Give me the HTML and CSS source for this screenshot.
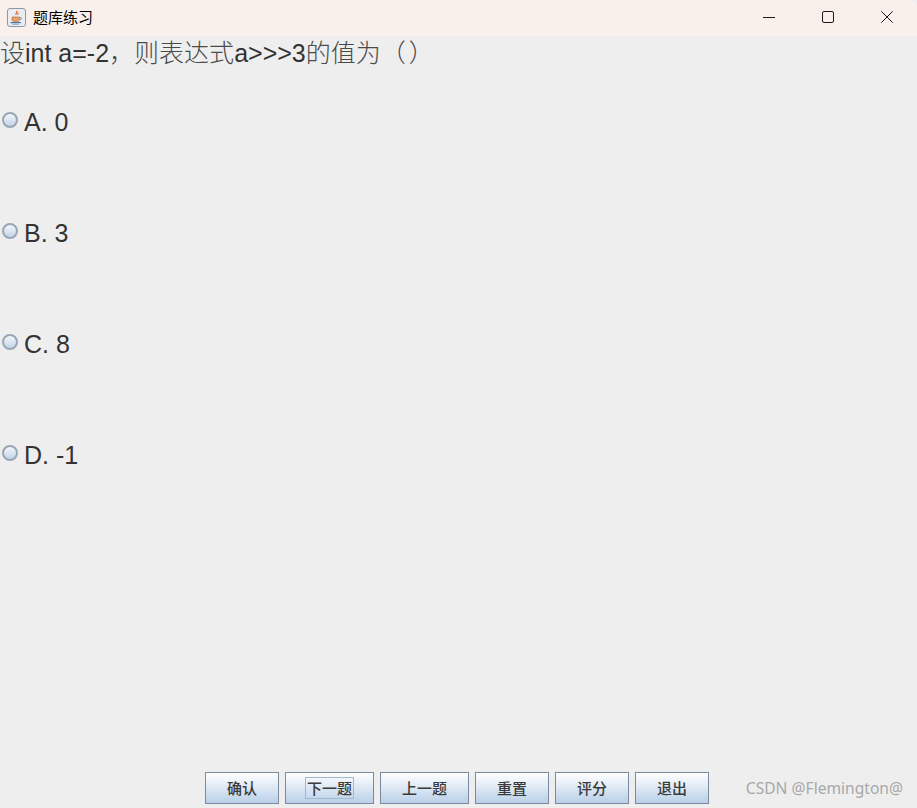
FILE: index.html
```html
<!DOCTYPE html>
<html lang="zh">
<head>
<meta charset="utf-8">
<title>题库练习</title>
<link rel="stylesheet" href="styles.css">
</head>
<body>
<div class="window">
  <header class="titlebar">
    <div class="app">
      <svg class="app-icon" width="19" height="19" viewBox="0 0 19 19">
        <rect x="0.5" y="0.5" width="18" height="18" rx="2.5" fill="#ebedf0" stroke="#8c98a6"/>
        <path d="M9.5 3c1.6 1.4-1.6 2.2-.4 3.8M11 4.5c.8 1-1 1.4-.3 2.4" fill="none" stroke="#d9622b" stroke-width="1.1"/>
        <path d="M5 9h7.5v2.6c0 1.3-1 2-2 2H7c-1 0-2-.7-2-2z" fill="#e9a06a" stroke="#b5622f" stroke-width=".6"/>
        <path d="M12.5 9.6h1.4c.9 0 .9 2-.9 2" fill="none" stroke="#5a7fa6" stroke-width=".8"/>
        <path d="M3.5 14.6h10.5" stroke="#4f7ba8" stroke-width="1.2"/>
        <path d="M5 16.2h7" stroke="#7b9cc0" stroke-width="1"/>
      </svg>
      <span class="app-title">题库练习</span>
    </div>
    <div class="controls">
      <span class="control"><svg width="12" height="12" viewBox="0 0 12 12"><path d="M0 6.5h12" stroke="#1a1a1a" stroke-width="1"/></svg></span>
      <span class="control"><svg width="12" height="12" viewBox="0 0 12 12"><rect x=".5" y=".5" width="11" height="11" rx="1.5" fill="none" stroke="#1a1a1a"/></svg></span>
      <span class="control"><svg width="12" height="12" viewBox="0 0 12 12"><path d="M.3.3l11.4 11.4M11.7.3L.3 11.7" stroke="#1a1a1a" stroke-width="1"/></svg></span>
    </div>
  </header>
  <main class="content">
    <p class="question"><span class="cjk">设</span>int a=-2<span class="cjk">，则表达式</span>a&gt;&gt;&gt;3<span class="cjk">的值为<span class="paren">（</span>）</span></p>
    <div class="options">
      <label class="option"><span class="radio"></span><span class="option-text">A. 0</span></label>
      <label class="option"><span class="radio"></span><span class="option-text">B. 3</span></label>
      <label class="option"><span class="radio"></span><span class="option-text">C. 8</span></label>
      <label class="option"><span class="radio"></span><span class="option-text">D. -1</span></label>
    </div>
  </main>
  <footer class="actions">
    <button class="btn btn-short">确认</button>
    <button class="btn btn-long"><span class="focus">下一题</span></button>
    <button class="btn btn-long">上一题</button>
    <button class="btn btn-short">重置</button>
    <button class="btn btn-short">评分</button>
    <button class="btn btn-short">退出</button>
  </footer>
  <span class="watermark">CSDN @Flemington@</span>
</div>
</body>
</html>
```

FILE: styles.css
```css
* { box-sizing: border-box; }
html, body { margin: 0; height: 100%; }
body {
  background: #eeeeee;
  font-family: "Liberation Sans", "Noto Sans CJK SC", sans-serif;
  color: #333333;
  overflow: hidden;
}
.window {
  position: relative;
  height: 808px;
  display: flex;
  flex-direction: column;
}
.titlebar {
  height: 36px;
  flex: none;
  background: #f9f0ec;
  display: flex;
  justify-content: space-between;
  align-items: center;
  border-top-right-radius: 8px;
  padding-bottom: 2px;
}
.app { display: flex; align-items: center; gap: 7px; padding-left: 7px; }
.app-icon { display: block; }
.app-title { font-size: 15px; line-height: 18px; color: #000; font-family: "Noto Sans CJK SC", sans-serif; font-weight: 400; }
.controls { display: flex; padding-right: 1px; }
.control { width: 59px; height: 34px; display: flex; align-items: center; justify-content: center; }
.content { flex: 1; }
.question {
  margin: 0;
  font-size: 25px;
  line-height: 34px;
  color: #333;
}
.cjk { font-weight: 300; color: #4a4a4a; }
.paren { padding-right: 3px; }
.options { display: flex; flex-direction: column; gap: 77px; margin-top: 35px; }
.option { display: flex; align-items: center; height: 34px; padding-left: 2px; gap: 6px; }
.radio {
  width: 16px;
  height: 16px;
  border-radius: 50%;
  border: 2px solid #98a6b6;
  background: linear-gradient(#f4f7fb, #c2d4e6);
  margin-top: -4px;
}
.option-text { font-size: 25px; line-height: 34px; }
.actions {
  flex: none;
  display: flex;
  gap: 6px;
  padding-left: 205px;
  padding-bottom: 4px;
}
.btn {
  height: 32px;
  padding: 0 0 2px;
  border: 1px solid #7a8a9e;
  background: linear-gradient(#ffffff, #b9d0e8);
  font-family: "Noto Sans CJK SC", sans-serif;
  font-size: 15px;
  font-weight: 500;
  color: #3a3a3a;
  display: flex;
  align-items: center;
  justify-content: center;
}
.btn-short { width: 74px; }
.btn-long { width: 89px; }
.focus { border: 1px solid #a3b8cc; height: 22px; line-height: 20px; width: 49px; display: block; margin-top: 2px; }
.watermark {
  position: absolute;
  right: 14px;
  bottom: 9px;
  font-family: "Noto Sans", sans-serif;
  font-size: 15.6px;
  color: #a8a8a8;
}
```
